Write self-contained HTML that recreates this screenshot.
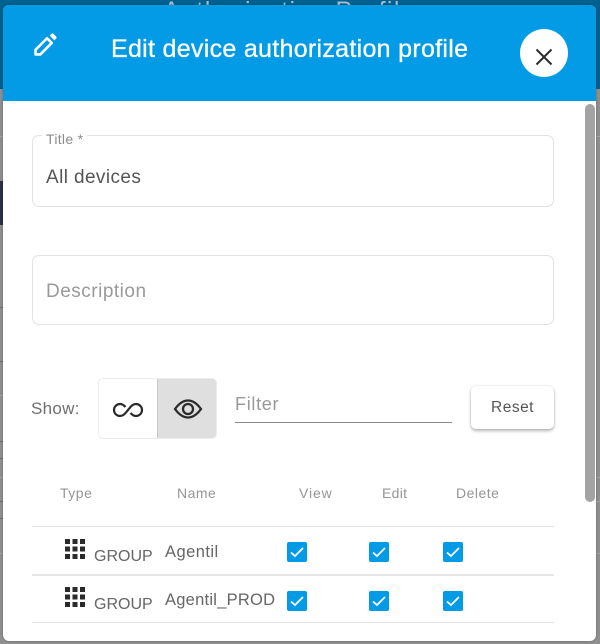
<!DOCTYPE html>
<html style="background:#8f8f8f"><head><meta charset="utf-8"><style>
html,body{margin:0;padding:0}
body{width:600px;height:644px;position:relative;overflow:hidden;background:#8f8f8f;font-family:"Liberation Sans",sans-serif;filter:blur(.3px)}
.a{position:absolute;white-space:nowrap}
.l{position:absolute;background:#6e6e6e;height:1px}
.h{font-size:14px;line-height:18px;color:#969696;letter-spacing:.5px;top:484px}
.t{font-size:16.5px;line-height:20px;color:#666}
.g{font-size:16px;line-height:20px;color:#666}
</style></head><body>
<div class="a" style="left:0;top:0;width:600px;height:89px;background:#00618f"></div>
<div class="a" style="left:163px;top:-3px;font-size:25px;color:#a9bccb;letter-spacing:1.4px">Authorization Profile</div>
<div class="a" style="left:0;top:181px;width:3px;height:44px;background:#2d3144"></div>
<div class="l" style="left:0;top:136px;width:3px;background:#a3a3a3"></div>
<div class="l" style="left:0;top:307px;width:3px"></div>
<div class="l" style="left:0;top:361px;width:3px"></div>
<div class="l" style="left:0;top:395px;width:3px;background:#a3a3a3"></div>
<div class="l" style="left:0;top:441px;width:3px"></div>
<div class="l" style="left:0;top:458px;width:3px"></div>
<div class="l" style="left:0;top:477px;width:3px;background:#a3a3a3"></div>
<div class="l" style="left:0;top:501px;width:3px"></div>
<div class="l" style="left:0;top:518px;width:3px"></div>
<div class="l" style="left:0;top:553px;width:3px;background:#a3a3a3"></div>
<div class="l" style="left:596px;top:136px;width:4px;background:#a3a3a3"></div>
<div class="l" style="left:596px;top:477px;width:4px;background:#a3a3a3"></div>
<div class="l" style="left:596px;top:501px;width:4px;background:#a3a3a3"></div>
<div class="l" style="left:596px;top:553px;width:4px;background:#a3a3a3"></div>

<div class="a" style="left:3px;top:5px;width:593px;height:636px;background:#fff;border-radius:6px;overflow:hidden;box-shadow:0 0 2px rgba(0,0,0,.3)">
<div class="a" style="left:0;top:0;width:593px;height:96px;background:#039be5"></div>
</div>

<svg class="a" style="left:34px;top:32px" width="24" height="24" viewBox="0 0 23 23"><path d="M1.500 21.500v-4.500L12.500 6l4.500 4.500L6 21.500z" fill="none" stroke="#fff" stroke-width="2.500" stroke-linejoin="round"/><path d="M15 3.500l1.800-1.800a1.300 1.300 0 0 1 1.800 0l2.700 2.700a1.300 1.300 0 0 1 0 1.800L19.500 8z" fill="#fff"/></svg>
<div class="a" style="left:111px;top:35px;font-size:25px;line-height:28px;color:#fff;letter-spacing:.3px;-webkit-text-stroke:.3px #fff">Edit device authorization profile</div>
<div class="a" style="left:520px;top:29px;width:48px;height:48px;border-radius:50%;background:#fff"></div>
<svg class="a" style="left:534px;top:47px" width="20" height="20" viewBox="0 0 20 20"><path d="M2.500 2.500L17.500 17.500M17.500 2.500L2.500 17.500" stroke="#2c2c2c" stroke-width="2"/></svg>

<div class="a" style="left:585px;top:104px;width:10px;height:398px;border-radius:5px;background:#a3a3a3"></div>

<div class="a" style="left:32px;top:135px;width:520px;height:70px;border:1px solid #e2e2e2;border-radius:7px"></div>
<div class="a" style="left:42px;top:129px;background:#fff;padding:0 4px;font-size:14px;line-height:20px;color:#8c8c8c;letter-spacing:.3px">Title *</div>
<div class="a" style="left:46px;top:167px;font-size:19px;line-height:22px;color:#555;letter-spacing:.4px">All devices</div>
<div class="a" style="left:32px;top:255px;width:520px;height:68px;border:1px solid #e2e2e2;border-radius:7px"></div>
<div class="a" style="left:46px;top:281px;font-size:19px;line-height:22px;color:#999;letter-spacing:.5px">Description</div>

<div class="a" style="left:31px;top:399px;font-size:17px;line-height:20px;color:#6e6e6e;letter-spacing:.3px">Show:</div>
<div class="a" style="left:98px;top:378px;width:117px;height:59px;border:1px solid #ececec;border-radius:5px;overflow:hidden;background:#fff">
<div class="a" style="left:58px;top:0;width:59px;height:59px;background:#dfdfdf;border-left:1px solid #c8c8c8"></div>
</div>
<svg class="a" style="left:112px;top:399px" width="32" height="22" viewBox="0 0 32 22"><path d="M13.500 8C12 6.300 10.500 5 8 5a6 6 0 0 0 0 12c3.500 0 5-2.500 8-6s4.500-6 8-6a6 6 0 0 1 0 12c-2.500 0-4-1.300-5.500-3" fill="none" stroke="#2b2b2b" stroke-width="2.200"/></svg>
<svg class="a" style="left:172px;top:397px" width="32" height="24" viewBox="0 0 32 24"><path d="M3 12C7 6.500 11 3.500 16 3.500S25 6.500 29 12c-4 5.500-8 8.500-13 8.500S7 17.500 3 12z" fill="none" stroke="#2b2b2b" stroke-width="2.300"/><circle cx="16" cy="12" r="5" fill="none" stroke="#2b2b2b" stroke-width="2.300"/></svg>

<div class="a" style="left:235px;top:393px;font-size:18px;line-height:22px;color:#999;letter-spacing:.7px">Filter</div>
<div class="a" style="left:235px;top:422px;width:217px;height:1px;background:#8a8a8a"></div>
<div class="a" style="left:471px;top:386px;width:83px;height:43px;border-radius:5px;background:#fff;box-shadow:0 2px 3px rgba(0,0,0,.28),0 0 2px rgba(0,0,0,.12);text-align:center;font-size:15.500px;line-height:44px;color:#555;letter-spacing:.5px">Reset</div>

<div class="a h" style="left:60px">Type</div>
<div class="a h" style="left:177px">Name</div>
<div class="a h" style="left:299px;letter-spacing:.9px">View</div>
<div class="a h" style="left:382px;letter-spacing:.3px">Edit</div>
<div class="a h" style="left:456px">Delete</div>

<div class="a" style="left:32px;top:526px;width:522px;height:1px;background:#e4e4e4"></div>
<div class="a" style="left:32px;top:574px;width:522px;height:2px;background:#e4e4e4"></div>
<div class="a" style="left:32px;top:622px;width:522px;height:1px;background:#e4e4e4"></div>

<svg class="a" style="left:65px;top:539px" width="20" height="20" viewBox="0 0 20 20" fill="#2b2b2b"><rect x="0" y="0" width="5" height="5"/><rect x="7.500" y="0" width="5" height="5"/><rect x="15" y="0" width="5" height="5"/><rect x="0" y="7.500" width="5" height="5"/><rect x="7.500" y="7.500" width="5" height="5"/><rect x="15" y="7.500" width="5" height="5"/><rect x="0" y="15" width="5" height="5"/><rect x="7.500" y="15" width="5" height="5"/><rect x="15" y="15" width="5" height="5"/></svg>
<svg class="a" style="left:65px;top:587px" width="20" height="20" viewBox="0 0 20 20" fill="#2b2b2b"><rect x="0" y="0" width="5" height="5"/><rect x="7.500" y="0" width="5" height="5"/><rect x="15" y="0" width="5" height="5"/><rect x="0" y="7.500" width="5" height="5"/><rect x="7.500" y="7.500" width="5" height="5"/><rect x="15" y="7.500" width="5" height="5"/><rect x="0" y="15" width="5" height="5"/><rect x="7.500" y="15" width="5" height="5"/><rect x="15" y="15" width="5" height="5"/></svg>
<div class="a g" style="left:94px;top:547px">GROUP</div>
<div class="a g" style="left:94px;top:595px">GROUP</div>
<div class="a t" style="left:165px;top:542px;letter-spacing:.45px">Agentil</div>
<div class="a t" style="left:165px;top:590px;letter-spacing:.25px">Agentil_PROD</div>

<svg class="a" style="left:287px;top:542px" width="20" height="20" viewBox="0 0 20 20"><rect width="20" height="20" rx="2" fill="#039be5"/><path d="M4 10.500l4 3.500 8-8" fill="none" stroke="#fff" stroke-width="1.800"/></svg>
<svg class="a" style="left:369px;top:542px" width="20" height="20" viewBox="0 0 20 20"><rect width="20" height="20" rx="2" fill="#039be5"/><path d="M4 10.500l4 3.500 8-8" fill="none" stroke="#fff" stroke-width="1.800"/></svg>
<svg class="a" style="left:443px;top:542px" width="20" height="20" viewBox="0 0 20 20"><rect width="20" height="20" rx="2" fill="#039be5"/><path d="M4 10.500l4 3.500 8-8" fill="none" stroke="#fff" stroke-width="1.800"/></svg>
<svg class="a" style="left:287px;top:591px" width="20" height="20" viewBox="0 0 20 20"><rect width="20" height="20" rx="2" fill="#039be5"/><path d="M4 10.500l4 3.500 8-8" fill="none" stroke="#fff" stroke-width="1.800"/></svg>
<svg class="a" style="left:369px;top:591px" width="20" height="20" viewBox="0 0 20 20"><rect width="20" height="20" rx="2" fill="#039be5"/><path d="M4 10.500l4 3.500 8-8" fill="none" stroke="#fff" stroke-width="1.800"/></svg>
<svg class="a" style="left:443px;top:591px" width="20" height="20" viewBox="0 0 20 20"><rect width="20" height="20" rx="2" fill="#039be5"/><path d="M4 10.500l4 3.500 8-8" fill="none" stroke="#fff" stroke-width="1.800"/></svg>
</body></html>
